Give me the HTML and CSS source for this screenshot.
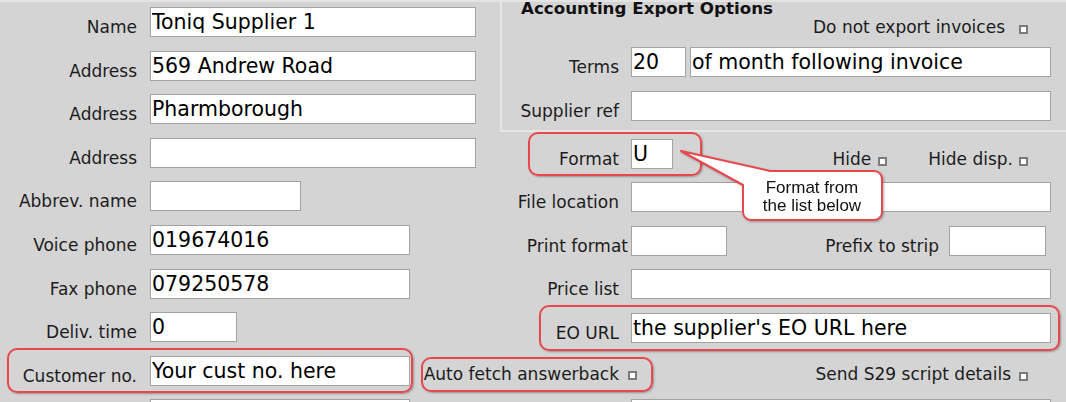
FILE: index.html
```html
<!DOCTYPE html>
<html lang="en">
<head>
  <meta charset="UTF-8">
  <title>Supplier details</title>
  <link rel="stylesheet" href="styles.css">
</head>
<body>

  <div class="page">

    <div class="col-left">
      <div class="field"><span class="label">Name</span><input class="box w-326" type="text" value="Toniq Supplier 1"></div>
      <div class="field"><span class="label">Address</span><input class="box w-326" type="text" value="569 Andrew Road"></div>
      <div class="field"><span class="label">Address</span><input class="box w-326" type="text" value="Pharmborough"></div>
      <div class="field"><span class="label">Address</span><input class="box w-326" type="text" value=""></div>
      <div class="field"><span class="label">Abbrev. name</span><input class="box w-151" type="text" value=""></div>
      <div class="field"><span class="label">Voice phone</span><input class="box w-260" type="text" value="019674016"></div>
      <div class="field"><span class="label">Fax phone</span><input class="box w-260" type="text" value="079250578"></div>
      <div class="field"><span class="label">Deliv. time</span><input class="box w-87" type="text" value="0"></div>
      <div class="field"><span class="label">Customer no.</span><input class="box w-260" type="text" value="Your cust no. here"></div>
      <div class="field"><span class="label"></span><input class="box w-260" type="text" value=""></div>
    </div>

    <div class="col-right">
      <div class="panel">
        <div class="panel-title">Accounting Export Options</div>
        <div class="check-row">
          <span class="opt">Do not export invoices<span class="check gap-14"></span></span>
        </div>
        <div class="rfield rfield-first"><span class="label">Terms</span><input class="box w-55" type="text" value="20"><input class="box w-361 ml-4" type="text" value="of month following invoice"></div>
        <div class="rfield"><span class="label">Supplier ref</span><input class="box w-420" type="text" value=""></div>
      </div>

      <div class="lower">
        <div class="rfield">
          <span class="label">Format</span><input class="box w-42" type="text" value="U">
          <span class="spacer"></span>
          <span class="opt">Hide<span class="check gap-7"></span></span>
          <span class="opt ml-41 end">Hide disp.<span class="check gap-6"></span></span>
        </div>
        <div class="rfield"><span class="label">File location</span><input class="box w-420" type="text" value=""></div>
        <div class="rfield">
          <span class="label label-wide">Print format</span><input class="box w-96" type="text" value="">
          <span class="spacer"></span>
          <span class="label-inline">Prefix to strip</span><input class="box w-97 mr-20" type="text" value="">
        </div>
        <div class="rfield"><span class="label">Price list</span><input class="box w-420" type="text" value=""></div>
        <div class="rfield"><span class="label">EO URL</span><input class="box w-420" type="text" value="the supplier's EO URL here"></div>
        <div class="rfield rfield-checks">
          <span class="label label-check">Auto fetch answerback</span><span class="check"></span>
          <span class="spacer"></span>
          <span class="opt end">Send S29 script details<span class="check gap-8"></span></span>
        </div>
        <div class="rfield"><span class="label"></span><input class="box w-420" type="text" value=""></div>
      </div>
    </div>

    <!-- red annotation marks over the form -->
    <div class="mark mark-format"></div>
    <div class="mark mark-eourl"></div>
    <div class="mark mark-cust"></div>
    <div class="mark mark-fetch"></div>

    <svg class="callout" width="220" height="90" viewBox="0 0 220 90">
      <path d="M100,31 H204 A8,8 0 0 1 212,39 V72 A8,8 0 0 1 204,80 H81 A8,8 0 0 1 73,72 V45 L11,11 Z"
            fill="#fff" stroke="#e8474c" stroke-width="2" stroke-linejoin="round"/>
      <text x="142" y="53" text-anchor="middle">Format from</text>
      <text x="142" y="71" text-anchor="middle">the list below</text>
    </svg>

  </div>

</body>
</html>
```

FILE: styles.css
```css
body {
  margin: 0;
  background-color: #d4d4d4;
  font-family: "DejaVu Sans", Verdana, sans-serif;
  color: #1c1c1c;
}

.page {
  position: relative;
  display: flex;
  width: 1066px;
  height: 402px;
  overflow: hidden;
  box-sizing: border-box;
  border-top: 2px solid #e4e4e4;
}

.col-left {
  width: 500px;
  flex: none;
  padding-top: 5px;
}

.col-right {
  flex: 1;
  min-width: 0;
}

/* left column rows */
.field {
  display: flex;
  align-items: flex-end;
  height: 30px;
  margin-bottom: 13.6px;
}

.label {
  display: flex;
  justify-content: flex-end;
  flex: none;
  white-space: nowrap;
  font-size: 17px;
  line-height: 20px;
}

.field .label {
  width: 137px;
  margin-right: 13px;
}

.box {
  flex: none;
  height: 30px;
  box-sizing: border-box;
  margin: 0;
  padding: 0 1px;
  border: 1px solid #a3a3a3;
  background: #fff;
  color: #000;
  font-family: "DejaVu Sans", Verdana, sans-serif;
  font-size: 20.5px;
  outline: none;
}

.w-326 { width: 326px; }
.w-151 { width: 151px; }
.w-260 { width: 260px; }
.w-87 { width: 87px; }
.w-420 { width: 420px; }
.w-55 { width: 55px; }
.w-361 { width: 361px; }
.w-42 { width: 42px; }
.w-96 { width: 96px; }
.w-97 { width: 97px; }

.ml-4 { margin-left: 4px; }
.ml-41 { margin-left: 41px; }
.mr-20 { margin-right: 20px; }

/* right column */
.panel {
  border-left: 2px solid #e6e6e6;
  border-bottom: 2px solid #e6e6e6;
  padding-bottom: 9px;
}

.panel-title {
  margin-top: -2px;
  padding-left: 19px;
  font-weight: bold;
  font-size: 16.7px;
  line-height: 17px;
  color: #111;
}

.check-row {
  display: flex;
  justify-content: flex-end;
  padding-right: 38px;
  font-size: 17px;
  line-height: 20px;
}

.rfield {
  display: flex;
  align-items: flex-end;
  height: 30px;
  margin-bottom: 13.4px;
}

.panel .rfield {
  margin-bottom: 14px;
}

.panel .rfield:last-child {
  margin-bottom: 0;
}

.panel .rfield-first {
  margin-top: 10px;
}

.rfield .label {
  width: 117px;
  margin-right: 12px;
}

.rfield .label-wide {
  width: 126px;
  margin-right: 3px;
}

.rfield .label-check {
  margin-right: 9px;
}

.rfield-checks {
  align-items: center;
  box-sizing: border-box;
  padding-top: 6px;
}

.lower {
  padding-left: 2px;
  padding-top: 7px;
}

.spacer {
  flex: 1;
}

.label-inline {
  font-size: 17px;
  line-height: 20px;
  white-space: nowrap;
  margin-right: 10px;
}

.opt {
  white-space: nowrap;
  font-size: 17px;
  line-height: 20px;
}

.opt.end {
  margin-right: 38px;
}

.check {
  display: inline-block;
  width: 9px;
  height: 9px;
  box-sizing: border-box;
  border: 2px solid #7b7b7b;
  background: #fff;
  vertical-align: -1px;
}

.rfield-checks > .check {
  flex: none;
  margin-top: 4px;
}

.gap-6 { margin-left: 6px; }
.gap-7 { margin-left: 7px; }
.gap-8 { margin-left: 8px; }
.gap-14 { margin-left: 14px; }

/* annotations */
.mark {
  position: absolute;
  box-sizing: border-box;
  border: 2px solid #e8474c;
  border-radius: 10px;
  box-shadow: 1px 1px 2px rgba(0, 0, 0, 0.3);
}

.mark-format { left: 528px; top: 130px; width: 174px; height: 44px; }
.mark-eourl { left: 539px; top: 303px; width: 521px; height: 46px; }
.mark-cust { left: 7px; top: 346px; width: 406px; height: 45px; }
.mark-fetch { left: 421px; top: 355px; width: 232px; height: 35px; }

.callout {
  position: absolute;
  left: 670px;
  top: 138px;
  overflow: visible;
  filter: drop-shadow(1px 1px 1px rgba(0, 0, 0, 0.3));
}

.callout text {
  font-family: "Liberation Sans", Arial, sans-serif;
  font-size: 17px;
  fill: #111;
}
```
